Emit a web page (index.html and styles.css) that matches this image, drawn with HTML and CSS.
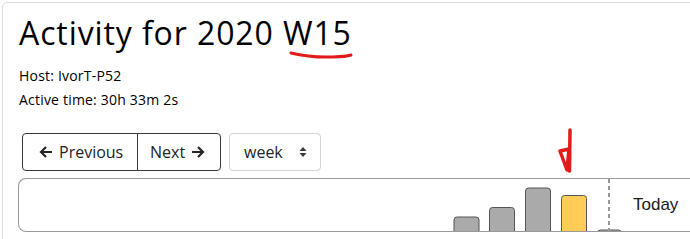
FILE: index.html
```html
<!DOCTYPE html>
<html lang="en">
<head>
  <meta charset="UTF-8">
  <title>Activity for 2020 W15</title>
  <link rel="stylesheet" href="styles.css">
</head>
<body>
  <div class="card">
    <h2 class="title">Activity for 2020 <span class="week-no">W15</span></h2>
    <p class="meta">Host: IvorT-P52</p>
    <p class="meta">Active time: 30h 33m 2s</p>

    <div class="controls">
      <div class="btn-group">
        <button class="btn">
          <svg width="14" height="14" viewBox="0 0 14 14"><path d="M13 7H2.5M7 2L2 7l5 5" fill="none" stroke="#212529" stroke-width="2.2"/></svg>
          Previous
        </button>
        <button class="btn">
          Next
          <svg width="14" height="14" viewBox="0 0 14 14"><path d="M1 7h10.5M7 2l5 5-5 5" fill="none" stroke="#212529" stroke-width="2.2"/></svg>
        </button>
      </div>
      <div class="select">
        <span>week</span>
        <svg width="8" height="12" viewBox="0 0 8 12"><path d="M4 1L7.5 5H0.5z M4 11L7.5 7H0.5z" fill="#343a40"/></svg>
      </div>
    </div>

    <div class="timeline">
      <svg class="bars" width="720" height="52" viewBox="0 0 720 52">
        <rect x="435" y="38" width="25" height="20" rx="3" fill="#aaa" stroke="#555" stroke-width="1"/>
        <rect x="470.5" y="28.5" width="25" height="30" rx="3" fill="#aaa" stroke="#555" stroke-width="1"/>
        <rect x="506.5" y="9" width="25" height="50" rx="3" fill="#aaa" stroke="#555" stroke-width="1"/>
        <rect x="542.5" y="16.5" width="25" height="42" rx="3" fill="#ffcc55" stroke="#555" stroke-width="1"/>
        <rect x="578.5" y="51" width="24" height="10" rx="3" fill="#aaa" stroke="#555" stroke-width="1"/>
        <line x1="590" y1="0" x2="590" y2="52" stroke="#999" stroke-width="2" stroke-dasharray="4 3"/>
        <text x="614" y="31" class="today">Today</text>
      </svg>
    </div>
  </div>

  <svg class="mark underline" width="70" height="12" viewBox="0 0 70 12">
    <path d="M3 3 C 15 6, 30 7.5, 45 7 S 60 6, 63 5" fill="none" stroke="#e21a1a" stroke-width="3" stroke-linecap="round"/>
  </svg>
  <svg class="mark arrow" width="30" height="48" viewBox="0 0 30 48">
    <path d="M15 3 L14.5 44" fill="none" stroke="#e21a1a" stroke-width="3.5" stroke-linecap="round"/>
    <path d="M5 24 L14 22 L12 43 Z" fill="none" stroke="#e21a1a" stroke-width="3.5" stroke-linejoin="round"/>
  </svg>
</body>
</html>
```

FILE: styles.css
```css
html, body {
  margin: 0;
  padding: 0;
  background-color: #fff;
  overflow: hidden;
}
body {
  font-family: "Open Sans", sans-serif;
  color: #000;
  position: relative;
  height: 239px;
}
.card {
  margin: 2px 0 0 2px;
  width: 760px;
  height: 400px;
  border: 1px solid #ddd;
  border-radius: 5px;
  padding: 11px 16px;
}
.title {
  margin: 0 0 12px 0;
  font-size: 32px;
  font-weight: 400;
  line-height: 1.2;
  letter-spacing: 0.9px;
}
.meta {
  margin: 0;
  font-size: 14px;
  line-height: 24px;
  letter-spacing: 0.2px;
}
.controls {
  display: flex;
  gap: 8px;
  margin: 21px 0 7px 3px;
}
.btn-group {
  display: flex;
}
.btn {
  display: flex;
  align-items: center;
  gap: 6px;
  height: 38px;
  padding: 0 12px 0 16px;
  font-family: inherit;
  font-size: 16px;
  color: #212529;
  background: #fff;
  border: 1px solid #343a40;
  cursor: pointer;
}
.btn:first-child {
  width: 116px;
  border-radius: 4px 0 0 4px;
}
.btn:last-child {
  width: 84px;
  margin-left: -1px;
  padding: 0 12px;
  border-radius: 0 4px 4px 0;
}
.select {
  display: flex;
  align-items: center;
  justify-content: space-between;
  width: 92px;
  height: 38px;
  box-sizing: border-box;
  padding: 0 13px 0 14px;
  font-size: 16px;
  color: #212529;
  border: 1px solid #ced4da;
  border-radius: 4px;
}
.timeline {
  margin-left: -1px;
  height: 52px;
  border: 1px solid #999;
  border-right: none;
  border-radius: 8px 0 0 8px;
  overflow: hidden;
}
.bars {
  display: block;
}
.today {
  font-family: "Liberation Sans", sans-serif;
  font-size: 17px;
  fill: #1a1a1a;
}
.mark {
  position: absolute;
}
.underline {
  left: 288px;
  top: 50px;
}
.arrow {
  left: 555px;
  top: 127px;
}
```
